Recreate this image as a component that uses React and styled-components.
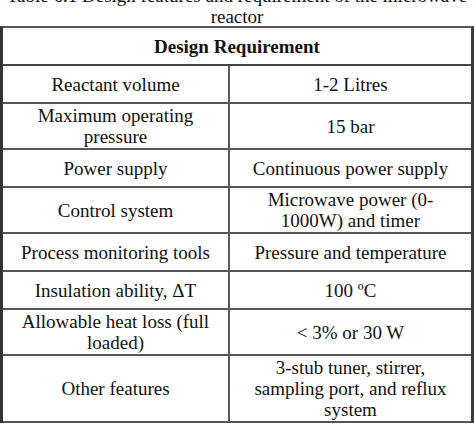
import styled, { createGlobalStyle } from "styled-components";

const GlobalStyle = createGlobalStyle`
  html, body {
    margin: 0;
    padding: 0;
    background: #ffffff;
  }
  body {
    font-family: "Liberation Serif", "Times New Roman", serif;
    color: #111111;
  }
`;

// rows of the requirement table, one entry per line of text
const rows = [
  { label: ["Reactant volume"], value: ["1-2 Litres"] },
  { label: ["Maximum operating", "pressure"], value: ["15 bar"] },
  { label: ["Power supply"], value: ["Continuous power supply"] },
  { label: ["Control system"], value: ["Microwave power (0-", "1000W) and timer"] },
  { label: ["Process monitoring tools"], value: ["Pressure and temperature"] },
  { label: ["Insulation ability, ΔT"], value: ["100 ºC"] },
  { label: ["Allowable heat loss (full", "loaded)"], value: ["< 3% or 30 W"] },
  {
    label: ["Other features"],
    value: ["3-stub tuner, stirrer,", "sampling port, and reflux", "system"],
  },
];

const App = () => {
  return (
    <>
      <GlobalStyle />
      <Page>
        <Caption>
          Table 6.1 Design features and requirement of the microwave
          <br />
          reactor
        </Caption>
        <Table>
          <HeaderCell>Design Requirement</HeaderCell>
          {rows.map((row, i) => (
            <Row key={i}>
              <Cell $left>
                {row.label.map((line) => (
                  <Line key={line}>{line}</Line>
                ))}
              </Cell>
              <Cell>
                {row.value.map((line) => (
                  <Line key={line}>{line}</Line>
                ))}
              </Cell>
            </Row>
          ))}
        </Table>
      </Page>
    </>
  );
};

export default App;

const Page = styled.div`
  width: 474px;
  padding-top: 1px;
`;

const Caption = styled.div`
  margin-top: -16px;
  height: 41px;
  font-size: 19px;
  line-height: 21px;
  text-align: center;
  white-space: nowrap;
`;

const Table = styled.div`
  display: grid;
  grid-template-columns: 227px 1fr;
  box-sizing: border-box;
  width: 474px;
  border-top: 2px solid #555555;
  border-left: 3px solid #333333;
  border-right: 3px solid #3c3c3c;
  font-size: 19px;
  line-height: 21px;
`;

const HeaderCell = styled.div`
  grid-column: 1 / span 2;
  box-sizing: border-box;
  height: 38px;
  display: flex;
  align-items: center;
  justify-content: center;
  font-weight: bold;
  border-bottom: 2px solid #444444;
`;

const Row = styled.div`
  display: contents;
`;

const Cell = styled.div`
  box-sizing: border-box;
  min-height: 38px;
  padding: 1px 8px;
  display: flex;
  flex-direction: column;
  align-items: center;
  justify-content: center;
  text-align: center;
  border-bottom: 2px solid #555555;
  border-right: ${(p) => (p.$left ? "2px solid #5a5a5a" : "none")};
`;

const Line = styled.span`
  display: block;
  white-space: nowrap;
`;
